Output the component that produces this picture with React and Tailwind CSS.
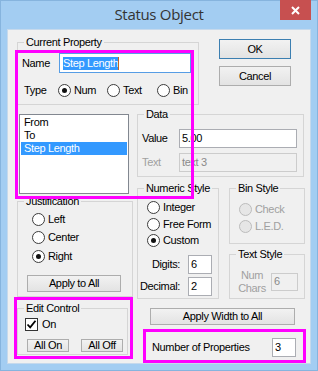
import React from "react";

const Group = ({ label, className = "", children }) => (
  <div className={`border border-[#d5d5d5] ${className}`}>
    <div className="-mt-[7px] ml-[6px] w-fit bg-[#f0f0f0] px-[2px] leading-[13px]">{label}</div>
    {children}
  </div>
);

const Radio = ({ label, checked, disabled, className = "" }) => (
  <div className={`flex h-[13px] items-center gap-[3px] ${className}`}>
    <span
      className={`flex h-[13px] w-[13px] shrink-0 items-center justify-center rounded-full border ${
        disabled ? "border-[#bcbcbc] bg-[#e6e6e6]" : "border-[#3c3c3c] bg-white"
      }`}
    >
      {checked && <span className="h-[5px] w-[5px] rounded-full bg-[#111]" />}
    </span>
    <span className={disabled ? "text-[#a0a0a0]" : ""}>{label}</span>
  </div>
);

const Btn = ({ children, def, className = "" }) => (
  <button
    type="button"
    className={`flex items-center justify-center border bg-gradient-to-b from-[#f2f2f2] to-[#e3e3e3] leading-[13px] ${
      def ? "border-[#3c7fb1]" : "border-[#adadad]"
    } ${className}`}
  >
    {children}
  </button>
);

const Box = ({ children, disabled, className = "" }) => (
  <div
    className={`flex items-center border pl-[2px] ${
      disabled ? "border-[#cccccc] bg-[#f0f0f0] text-[#8a8a8a]" : "border-[#abadb3] bg-white"
    } ${className}`}
  >
    {children}
  </div>
);

export default function App() {
  return (
    <div className="relative h-[371px] w-[318px] overflow-hidden bg-[#a3cdf2] font-['Liberation_Sans',Arial,sans-serif] text-[11px] leading-[13px] tracking-[-0.35px] text-black shadow-[inset_0_0_0_1px_#86b4de]">
      {/* title bar */}
      <div className="flex h-[29px] items-start">
        <div className="w-[38px]" />
        <div className="flex-1 pt-[4px] text-center font-['Open_Sans',sans-serif] text-[15px] leading-[20px] tracking-[-0.3px] text-[#333]">
          Status Object
        </div>
        <div className="mr-[7px] flex h-[20px] w-[31px] items-center justify-center bg-[#c75050]">
          <svg width="9" height="9" viewBox="0 0 9 9">
            <path d="M1 1L8 8M8 1L1 8" stroke="#fff" strokeWidth="2" />
          </svg>
        </div>
      </div>

      {/* client area */}
      <div className="mx-[7px] h-[335px] border border-[#c6d9ec] bg-[#f0f0f0]">
        <div className="flex items-start">
          <Group label="Current Property" className="ml-[9px] mt-[12px] h-[63px] w-[182px]">
            <div className="mt-[4px] flex items-center pl-[4px]">
              <span className="w-[37px]">Name</span>
              <div className="flex h-[20px] w-[132px] items-center border border-[#569de5] bg-white pl-[3px]">
                <span className="bg-[#3399ff] text-white">Step Length</span>
                <span className="h-[13px] w-[1px] bg-[#c8641e]" />
              </div>
            </div>
            <div className="mt-[11px] flex items-center pl-[6px]">
              <span className="w-[34px]">Type</span>
              <Radio label="Num" checked className="w-[49px]" />
              <Radio label="Text" className="w-[50px]" />
              <Radio label="Bin" />
            </div>
          </Group>
          <div className="ml-[20px] mt-[9px] flex flex-col gap-[7px]">
            <Btn def className="h-[20px] w-[72px]">OK</Btn>
            <Btn className="h-[20px] w-[72px]">Cancel</Btn>
          </div>
        </div>

        <div className="mt-[9px] flex items-start">
          {/* left column */}
          <div className="ml-[9px] flex w-[120px] flex-col">
            <div className="ml-[2px] h-[80px] w-[110px] border border-[#828790] bg-white p-[1px]">
              <div className="h-[13px] pl-[3px]">From</div>
              <div className="h-[13px] pl-[3px]">To</div>
              <div className="h-[13px] bg-[#3399ff] pl-[3px] text-white">Step Length</div>
            </div>
            <Group label="Justification" className="mt-[7px] h-[96px] w-[116px]">
              <div className="mt-[5px] flex flex-col gap-[5.3px] pl-[14px]">
                <Radio label="Left" />
                <Radio label="Center" />
                <Radio label="Right" checked />
              </div>
              <Btn className="ml-[9px] mt-[12px] h-[17px] w-[94px]">Apply to All</Btn>
            </Group>
            <Group label="Edit Control" className="mt-[11px] h-[47px] w-[111px]">
              <div className="mt-[3px] flex items-center gap-[4px] pl-[7px]">
                <span className="flex h-[13px] w-[13px] items-center justify-center border border-[#333] bg-white">
                  <svg width="11" height="11" viewBox="0 0 11 11">
                    <path d="M1.5 5.5L4.2 8.3L9.5 1.8" fill="none" stroke="#000" strokeWidth="1.8" />
                  </svg>
                </span>
                <span>On</span>
              </div>
              <div className="mt-[8px] flex gap-[12px] pl-[9px]">
                <Btn className="h-[13px] w-[42px]">All On</Btn>
                <Btn className="h-[13px] w-[42px]">All Off</Btn>
              </div>
            </Group>
          </div>

          {/* right column */}
          <div className="w-[168px]">
            <Group label="Data" className="h-[63px] w-[167px]">
              <div className="mt-[8px] flex items-center pl-[4px]">
                <span className="w-[37px]">Value</span>
                <Box className="h-[19px] w-[118px]">5.00</Box>
              </div>
              <div className="mt-[5px] flex items-center pl-[4px]">
                <span className="w-[37px] text-[#a0a0a0]">Text</span>
                <Box disabled className="h-[19px] w-[118px]">text 3</Box>
              </div>
            </Group>
            <div className="mt-[11px] flex items-start">
              <Group label="Numeric Style" className="h-[111px] w-[82px]">
                <div className="mt-[6px] flex flex-col gap-[3.5px] pl-[9px]">
                  <Radio label="Integer" />
                  <Radio label="Free Form" />
                  <Radio label="Custom" checked />
                </div>
                <div className="mt-[8px] flex items-center">
                  <span className="w-[42px] text-right">Digits:</span>
                  <Box className="ml-[8px] h-[19px] w-[24px]">6</Box>
                </div>
                <div className="mt-[3px] flex items-center">
                  <span className="w-[42px] text-right">Decimal:</span>
                  <Box className="ml-[8px] h-[19px] w-[24px]">2</Box>
                </div>
              </Group>
              <div className="ml-[10px] flex w-[76px] flex-col">
                <Group label="Bin Style" className="h-[56px]">
                  <div className="mt-[7.5px] flex flex-col gap-[4.7px] pl-[9px]">
                    <Radio disabled label="Check" />
                    <Radio disabled label="L.E.D." />
                  </div>
                </Group>
                <Group label="Text Style" className="mt-[10px] h-[45px]">
                  <div className="mt-[7.5px] flex items-center pl-[8px]">
                    <span className="w-[28px] text-center text-[#a0a0a0]">
                      Num
                      <br />
                      Chars
                    </span>
                    <Box disabled className="ml-[5px] h-[18px] w-[27px]">6</Box>
                  </div>
                </Group>
              </div>
            </div>
            <Btn className="ml-[13px] mt-[9px] h-[17px] w-[145px]">Apply Width to All</Btn>
            <div className="mt-[13px] flex items-center pl-[15px] pr-[9px]">
              <span>Number of Properties</span>
              <Box className="ml-auto h-[19px] w-[24px]">3</Box>
            </div>
          </div>
        </div>
      </div>

      {/* annotation frames */}
      <div className="pointer-events-none absolute left-[15px] top-[50px] h-[149px] w-[179px] border-[3px] border-[#ff00ff]" />
      <div className="pointer-events-none absolute left-[14px] top-[297px] h-[62px] w-[119px] border-[3px] border-[#ff00ff]" />
      <div className="pointer-events-none absolute left-[143px] top-[329px] h-[34px] w-[163px] border-[3px] border-[#ff00ff]" />
    </div>
  );
}
